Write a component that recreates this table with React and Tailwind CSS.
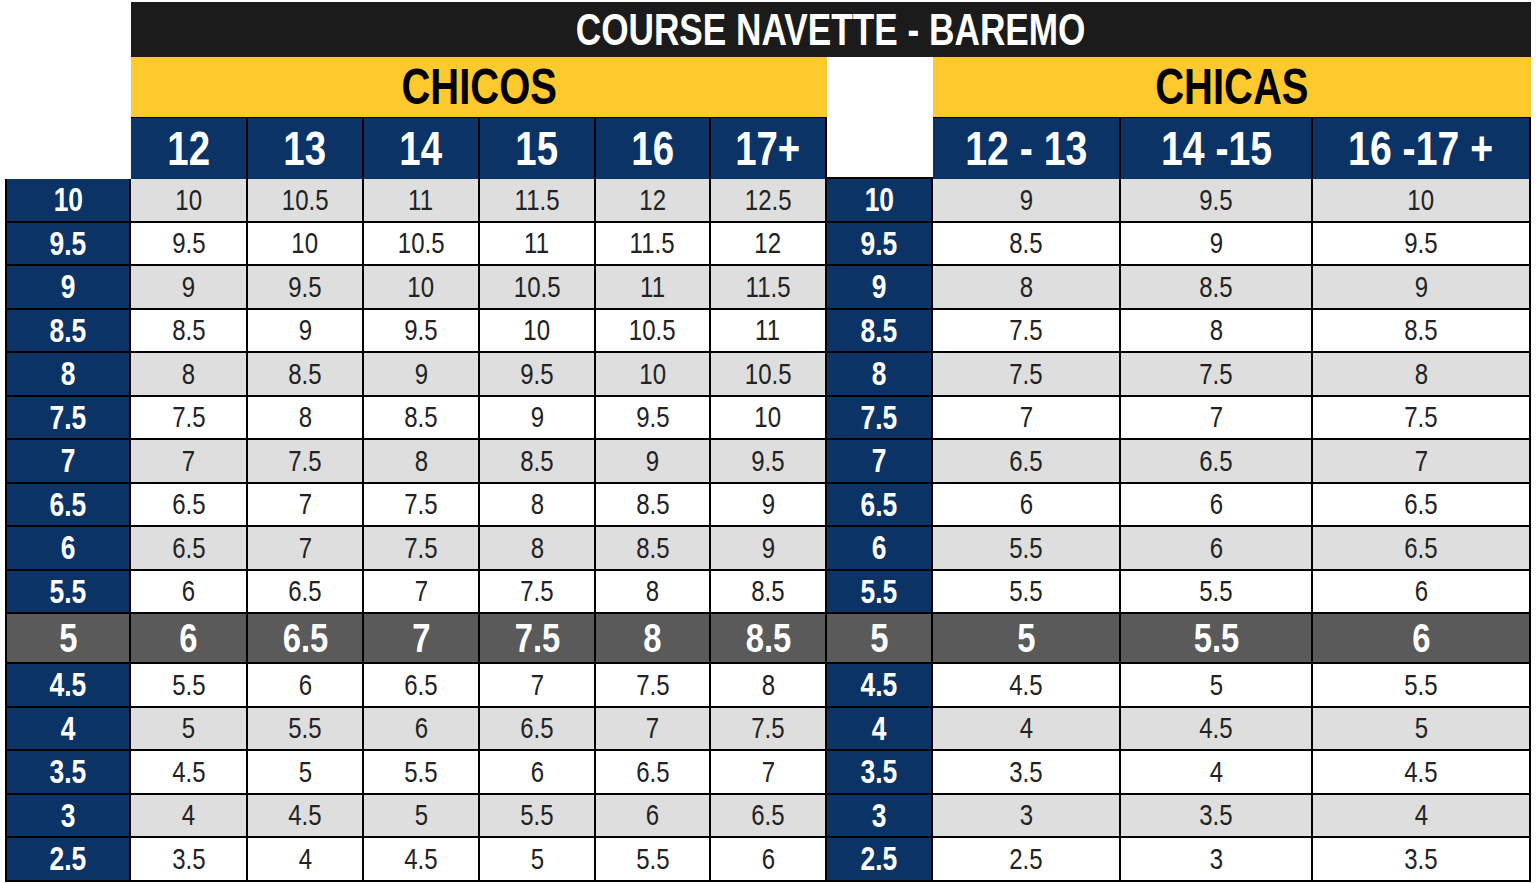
const chicos = ["12", "13", "14", "15", "16", "17+"];
const chicas = ["12 - 13", "14 -15", "16 -17 +"];

const rows = [
  ["10", ["10", "10.5", "11", "11.5", "12", "12.5"], ["9", "9.5", "10"]],
  ["9.5", ["9.5", "10", "10.5", "11", "11.5", "12"], ["8.5", "9", "9.5"]],
  ["9", ["9", "9.5", "10", "10.5", "11", "11.5"], ["8", "8.5", "9"]],
  ["8.5", ["8.5", "9", "9.5", "10", "10.5", "11"], ["7.5", "8", "8.5"]],
  ["8", ["8", "8.5", "9", "9.5", "10", "10.5"], ["7.5", "7.5", "8"]],
  ["7.5", ["7.5", "8", "8.5", "9", "9.5", "10"], ["7", "7", "7.5"]],
  ["7", ["7", "7.5", "8", "8.5", "9", "9.5"], ["6.5", "6.5", "7"]],
  ["6.5", ["6.5", "7", "7.5", "8", "8.5", "9"], ["6", "6", "6.5"]],
  ["6", ["6.5", "7", "7.5", "8", "8.5", "9"], ["5.5", "6", "6.5"]],
  ["5.5", ["6", "6.5", "7", "7.5", "8", "8.5"], ["5.5", "5.5", "6"]],
  ["5", ["6", "6.5", "7", "7.5", "8", "8.5"], ["5", "5.5", "6"]],
  ["4.5", ["5.5", "6", "6.5", "7", "7.5", "8"], ["4.5", "5", "5.5"]],
  ["4", ["5", "5.5", "6", "6.5", "7", "7.5"], ["4", "4.5", "5"]],
  ["3.5", ["4.5", "5", "5.5", "6", "6.5", "7"], ["3.5", "4", "4.5"]],
  ["3", ["4", "4.5", "5", "5.5", "6", "6.5"], ["3", "3.5", "4"]],
  ["2.5", ["3.5", "4", "4.5", "5", "5.5", "6"], ["2.5", "3", "3.5"]],
];

const font = { fontFamily: '"Liberation Sans", Arial, sans-serif' };

// no narrow font installed, squeeze Arial-width glyphs instead
const T = ({ children }) => (
  <span className="inline-block scale-x-[0.8] whitespace-nowrap">{children}</span>
);

function Label({ value, dark, first }) {
  return (
    <div
      className={`flex items-center justify-center border-b-2 border-r-2 border-black font-bold text-white ${
        first ? "border-l-2" : ""
      } ${dark ? "bg-[#5a5a5a] text-[41px]" : "bg-[#0b3366] text-[33px]"}`}
    >
      <T>{value}</T>
    </div>
  );
}

function Cell({ value, shade }) {
  const bg =
    shade === "dark"
      ? "bg-[#5a5a5a] text-white font-bold text-[41px]"
      : shade === "gray"
      ? "bg-[#dedede] text-[#222] text-[30px]"
      : "bg-white text-[#222] text-[30px]";
  return (
    <div className={`flex items-center justify-center border-b-2 border-r-2 border-black ${bg}`}>
      <T>{value}</T>
    </div>
  );
}

export default function App() {
  return (
    <div className="min-h-screen bg-white pl-[5px] pt-[2px]" style={font}>
      <div className="grid grid-cols-[126px_117px_116px_116px_116px_115px_116px_106px_188px_192px_218px] grid-rows-[55px_60px_62px_repeat(10,43.5px)_50px_repeat(5,43.5px)] leading-none">
        {/* title */}
        <div className="col-start-2 col-span-10 flex items-center justify-center bg-[#1b1b1b] text-[44px] font-bold text-white">
          <T>COURSE NAVETTE - BAREMO</T>
        </div>

        {/* groups */}
        <div className="col-start-2 col-span-6 flex items-center justify-center bg-[#fec92d] text-[50px] font-bold text-black">
          <T>CHICOS</T>
        </div>
        <div className="col-start-9 col-span-3 flex items-center justify-center bg-[#fec92d] text-[50px] font-bold text-black">
          <T>CHICAS</T>
        </div>

        {/* ages */}
        <div className="col-start-1" />
        {chicos.map((a) => (
          <div
            key={a}
            className="flex items-center justify-center border-r-2 border-t border-black bg-[#0b3366] text-[48px] font-bold text-white"
          >
            <T>{a}</T>
          </div>
        ))}
        <div className="border-b-2 border-black bg-white" />
        {chicas.map((a) => (
          <div
            key={a}
            className="flex items-center justify-center border-r-2 border-t border-black bg-[#0b3366] text-[49px] font-bold text-white"
          >
            <T>{a}</T>
          </div>
        ))}

        {/* data */}
        {rows.map(([lvl, boys, girls], i) => {
          const dark = lvl === "5";
          const shade = dark ? "dark" : i % 2 === 0 ? "gray" : "white";
          return [
            <Label key={`a${i}`} value={lvl} dark={dark} first />,
            ...boys.map((v, j) => <Cell key={`b${i}-${j}`} value={v} shade={shade} />),
            <Label key={`m${i}`} value={lvl} dark={dark} />,
            ...girls.map((v, j) => <Cell key={`g${i}-${j}`} value={v} shade={shade} />),
          ];
        })}
      </div>
    </div>
  );
}
